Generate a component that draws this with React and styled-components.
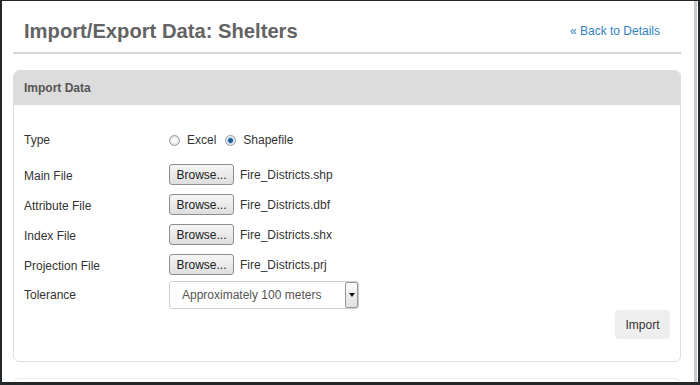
import React from 'react';
import styled, { createGlobalStyle } from 'styled-components';

const GlobalStyle = createGlobalStyle`
  html, body {
    margin: 0;
    padding: 0;
    background: #fff;
  }
  body {
    font-family: "Liberation Sans", Arial, sans-serif;
    font-size: 12px;
    color: #333;
  }
`;

const Frame = styled.div`
  width: 700px;
  height: 385px;
  box-sizing: border-box;
  border-style: solid;
  border-color: #23272a;
  border-width: 1px 2px 3px 2px;
  display: flex;
  overflow: hidden;
`;

const Content = styled.div`
  flex: 1;
  padding: 0 13px 0 11px;
  min-width: 0;
`;

const ScrollEdge = styled.div`
  width: 3px;
  background: #cacaca;
  margin-right: 1px;
`;

const PageHeader = styled.div`
  height: 51px;
  display: flex;
  align-items: center;
  justify-content: space-between;
  padding: 0 21px 0 11px;
  border-bottom: 2px solid #d6d6d6;
`;

const Title = styled.h1`
  margin: 0;
  font-size: 20.2px;
  font-weight: bold;
  color: #636363;
  padding-top: 10px;
`;

const BackLink = styled.a`
  font-size: 12px;
  color: #2f7fc1;
  text-decoration: none;
  padding-top: 9px;
`;

const Panel = styled.div`
  margin-top: 16px;
  border: 1px solid #dedede;
  border-radius: 6px;
  overflow: hidden;
  height: 292px;
  box-sizing: border-box;
`;

const NextPanel = styled(Panel)`
  margin-top: 16px;
  border-color: #ececec;
`;

const PanelHeader = styled.div`
  height: 34px;
  background: #dcdcdc;
  display: flex;
  align-items: center;
  padding-left: 10px;
  font-weight: bold;
  font-size: 12px;
  color: #555;
`;

const PanelBody = styled.div`
  padding: 25px 10px 0 10px;
`;

const Row = styled.div`
  display: grid;
  grid-template-columns: 145px 1fr;
  align-items: center;
  height: ${p => p.$h}px;
  margin-bottom: ${p => p.$gap}px;
`;

const Label = styled.div`
  font-size: 12px;
  color: #333;
  padding-top: ${p => p.$pt ?? 2}px;
`;

const Controls = styled.div`
  display: flex;
  align-items: center;
`;

const RadioItem = styled.label`
  display: flex;
  align-items: center;
  margin-right: 9px;
  font-size: 12px;
  color: #333;
`;

const RadioDot = styled.span`
  width: 9px;
  height: 9px;
  border-radius: 50%;
  border: 1px solid #9a9a9a;
  background: ${p => p.$on
    ? 'radial-gradient(circle, #1d5d9a 0 2px, #7fb0d9 2.5px, #e8eef3 3.5px)'
    : 'radial-gradient(circle, #fafafa 0 2px, #dcdcdc 5px)'};
  margin-right: 7px;
`;

const BrowseButton = styled.button`
  width: 65px;
  height: 21px;
  padding: 0;
  font-family: inherit;
  font-size: 12px;
  color: #222;
  border: 1px solid #8e8e8e;
  border-radius: 3px;
  background: linear-gradient(#f6f6f6, #dedede);
  margin-right: 6px;
`;

const FileName = styled.span`
  font-size: 12px;
  color: #333;
`;

const SelectBox = styled.div`
  width: 190px;
  height: 28px;
  box-sizing: border-box;
  border: 1px solid #cfcfcf;
  border-radius: 3px;
  display: flex;
  align-items: center;
  justify-content: space-between;
  padding-left: 12px;
  font-size: 12px;
  color: #555;
`;

const DropArrow = styled.span`
  width: 13px;
  height: 26px;
  box-sizing: border-box;
  border: 1px solid #999;
  border-radius: 2px;
  background: linear-gradient(#fbfbfb, #e0e0e0);
  display: flex;
  align-items: center;
  justify-content: center;
  &::after {
    content: '';
    border-left: 3px solid transparent;
    border-right: 3px solid transparent;
    border-top: 4px solid #111;
  }
`;

const Actions = styled.div`
  display: flex;
  justify-content: flex-end;
  margin-top: 1px;
`;

const ImportButton = styled.button`
  width: 55px;
  height: 29px;
  border: none;
  border-radius: 4px;
  background: #eeeeee;
  font-family: inherit;
  font-size: 12px;
  color: #333;
  padding: 0;
`;

const files = [
  ['Main File', 'Fire_Districts.shp'],
  ['Attribute File', 'Fire_Districts.dbf'],
  ['Index File', 'Fire_Districts.shx'],
  ['Projection File', 'Fire_Districts.prj'],
];

export default function App() {
  return (
    <>
      <GlobalStyle />
      <Frame>
        <Content>
          <PageHeader>
            <Title>Import/Export Data: Shelters</Title>
            <BackLink href="#">« Back to Details</BackLink>
          </PageHeader>
          <Panel>
            <PanelHeader>Import Data</PanelHeader>
            <PanelBody>
              <Row $h={20} $gap={14}>
                <Label $pt={0}>Type</Label>
                <Controls>
                  <RadioItem><RadioDot />Excel</RadioItem>
                  <RadioItem><RadioDot $on />Shapefile</RadioItem>
                </Controls>
              </Row>
              {files.map(([label, name]) => (
                <Row key={label} $h={21} $gap={9}>
                  <Label>{label}</Label>
                  <Controls>
                    <BrowseButton>Browse...</BrowseButton>
                    <FileName>{name}</FileName>
                  </Controls>
                </Row>
              ))}
              <Row $h={28} $gap={0} style={{ marginTop: -3 }}>
                <Label $pt={0}>Tolerance</Label>
                <Controls>
                  <SelectBox>
                    Approximately 100 meters
                    <DropArrow />
                  </SelectBox>
                </Controls>
              </Row>
              <Actions>
                <ImportButton>Import</ImportButton>
              </Actions>
            </PanelBody>
          </Panel>
          <NextPanel />
        </Content>
        <ScrollEdge />
      </Frame>
    </>
  );
}
